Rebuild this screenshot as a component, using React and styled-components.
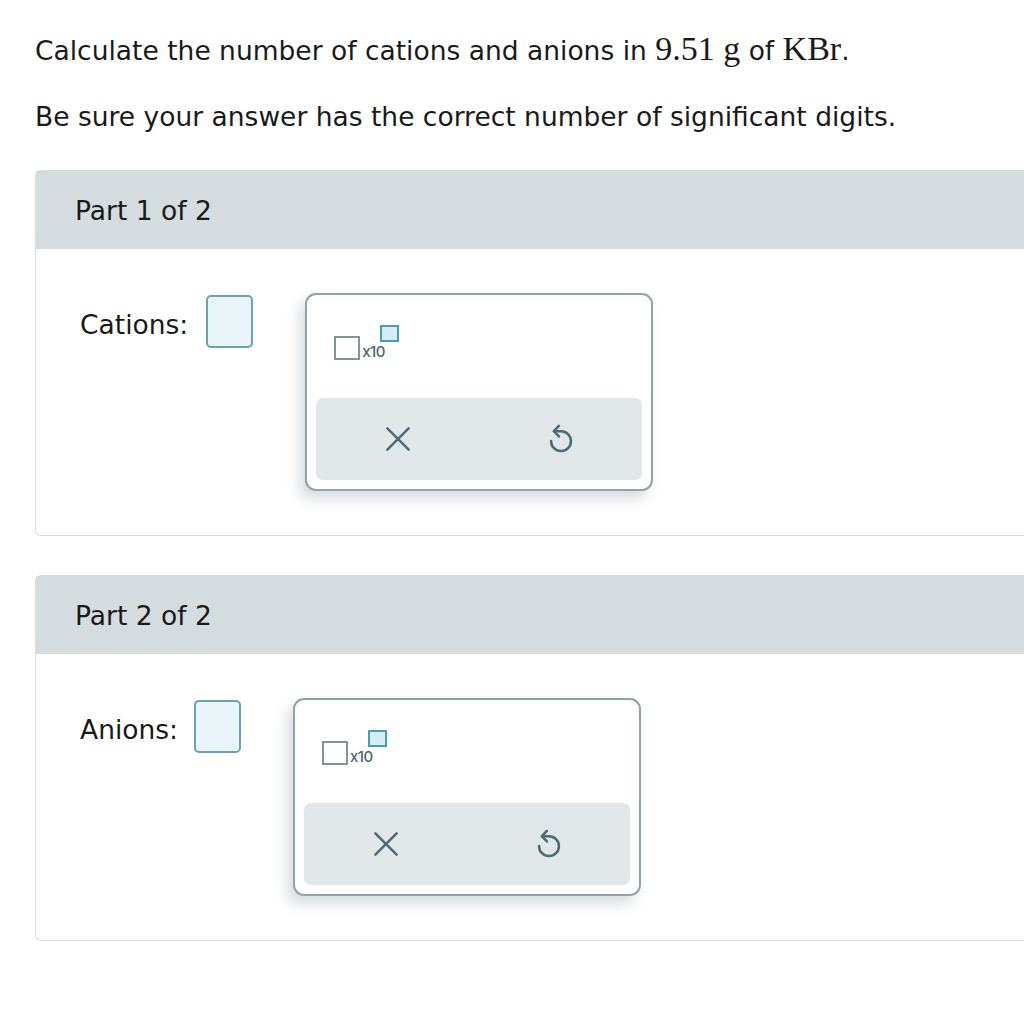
import React from 'react';
import styled, { createGlobalStyle } from 'styled-components';

const GlobalStyle = createGlobalStyle`
  body {
    margin: 0;
    background: #ffffff;
    font-family: 'DejaVu Sans', Verdana, sans-serif;
    color: #1a1a1a;
  }
`;

const Page = styled.div`
  padding: 31px 0 60px 35px;
`;

const Prompt = styled.p`
  margin: 0 0 ${(p) => p.$gap || 0}px;
  font-size: 26.5px;
  line-height: 36px;
`;

const Serif = styled.span`
  font-family: 'Liberation Serif', 'Times New Roman', serif;
  font-size: 34px;
`;

const Panel = styled.section`
  border: 1px solid #d5dce0;
  border-right: none;
  border-radius: 6px 0 0 6px;
  margin-bottom: 39px;
`;

const PanelHeader = styled.div`
  height: 78px;
  display: flex;
  align-items: center;
  padding-left: 39px;
  background: #d5dce0;
  font-size: 26.5px;
`;

const PanelBody = styled.div`
  display: flex;
  align-items: flex-start;
  padding: 44px 0 44px 44px;
`;

const Label = styled.div`
  font-size: 26.5px;
  line-height: 30px;
  margin-top: 17px;
  margin-right: ${(p) => p.$gap}px;
`;

const AnswerBox = styled.div`
  width: 43px;
  height: 49px;
  margin-top: 2px;
  border: 2px solid #6aa2b4;
  border-radius: 5px;
  background: #e8f4f7;
`;

const Popup = styled.div`
  width: 326px;
  margin-left: ${(p) => p.$gap}px;
  padding: 9px;
  border: 2px solid #8fa3ab;
  border-radius: 11px;
  background: #fff;
  box-shadow: -6px 8px 14px rgba(40, 60, 70, 0.18);
`;

const Template = styled.div`
  height: 94px;
  display: flex;
  align-items: flex-start;
  padding: 21px 0 0 18px;
  box-sizing: border-box;
`;

const Mantissa = styled.div`
  width: 22px;
  height: 20px;
  margin-top: 11px;
  border: 2px solid #7f949c;
`;

const Times = styled.span`
  font-family: Inter, 'Open Sans', sans-serif;
  font-size: 15px;
  line-height: 18px;
  font-weight: 500;
  color: #4d6470;
  margin-top: 18px;
  margin-left: 2px;
  letter-spacing: -0.6px;
`;

const Exponent = styled.div`
  width: 15px;
  height: 13px;
  margin-left: -5px;
  border: 2px solid #4a9bb4;
  background: #d4ecf2;
`;

const ButtonBar = styled.div`
  height: 82px;
  display: grid;
  grid-template-columns: 1fr 1fr;
  background: #e1e6e9;
  border-radius: 7px;
`;

const IconButton = styled.button`
  border: none;
  background: transparent;
  display: flex;
  align-items: center;
  justify-content: center;
  padding: 0;
  cursor: pointer;
  color: #4b6a77;
`;

const ClearIcon = () => (
  <svg width="30" height="30" viewBox="0 0 24 24" fill="none" stroke="currentColor" strokeWidth="2" strokeLinecap="round">
    <path d="M3.5 3.5 L20.5 20.5 M20.5 3.5 L3.5 20.5" />
  </svg>
);

const UndoIcon = () => (
  <svg width="34" height="34" viewBox="0 0 24 24" fill="none" stroke="currentColor" strokeWidth="1.8" strokeLinecap="round" strokeLinejoin="round">
    <path d="M7 6.5 H12 A7 7 0 1 1 5 13.5" />
    <path d="M10.5 2.8 L7 6.5 L10.5 10.2" />
  </svg>
);

const Part = ({ index, label, labelGap, popupGap }) => (
  <Panel>
    <PanelHeader>Part {index} of 2</PanelHeader>
    <PanelBody>
      <Label $gap={labelGap}>{label}</Label>
      <AnswerBox />
      <Popup $gap={popupGap}>
        <Template>
          <Mantissa />
          <Times>x10</Times>
          <Exponent />
        </Template>
        <ButtonBar>
          <IconButton aria-label="clear">
            <ClearIcon />
          </IconButton>
          <IconButton aria-label="undo">
            <UndoIcon />
          </IconButton>
        </ButtonBar>
      </Popup>
    </PanelBody>
  </Panel>
);

export default function App() {
  return (
    <>
      <GlobalStyle />
      <Page>
        <Prompt $gap={30}>
          Calculate the number of cations and anions in <Serif>9.51 g</Serif> of <Serif>KBr</Serif>.
        </Prompt>
        <Prompt $gap={35}>Be sure your answer has the correct number of significant digits.</Prompt>
        <Part index={1} label="Cations:" labelGap={18} popupGap={52} />
        <Part index={2} label="Anions:" labelGap={16} popupGap={52} />
      </Page>
    </>
  );
}
